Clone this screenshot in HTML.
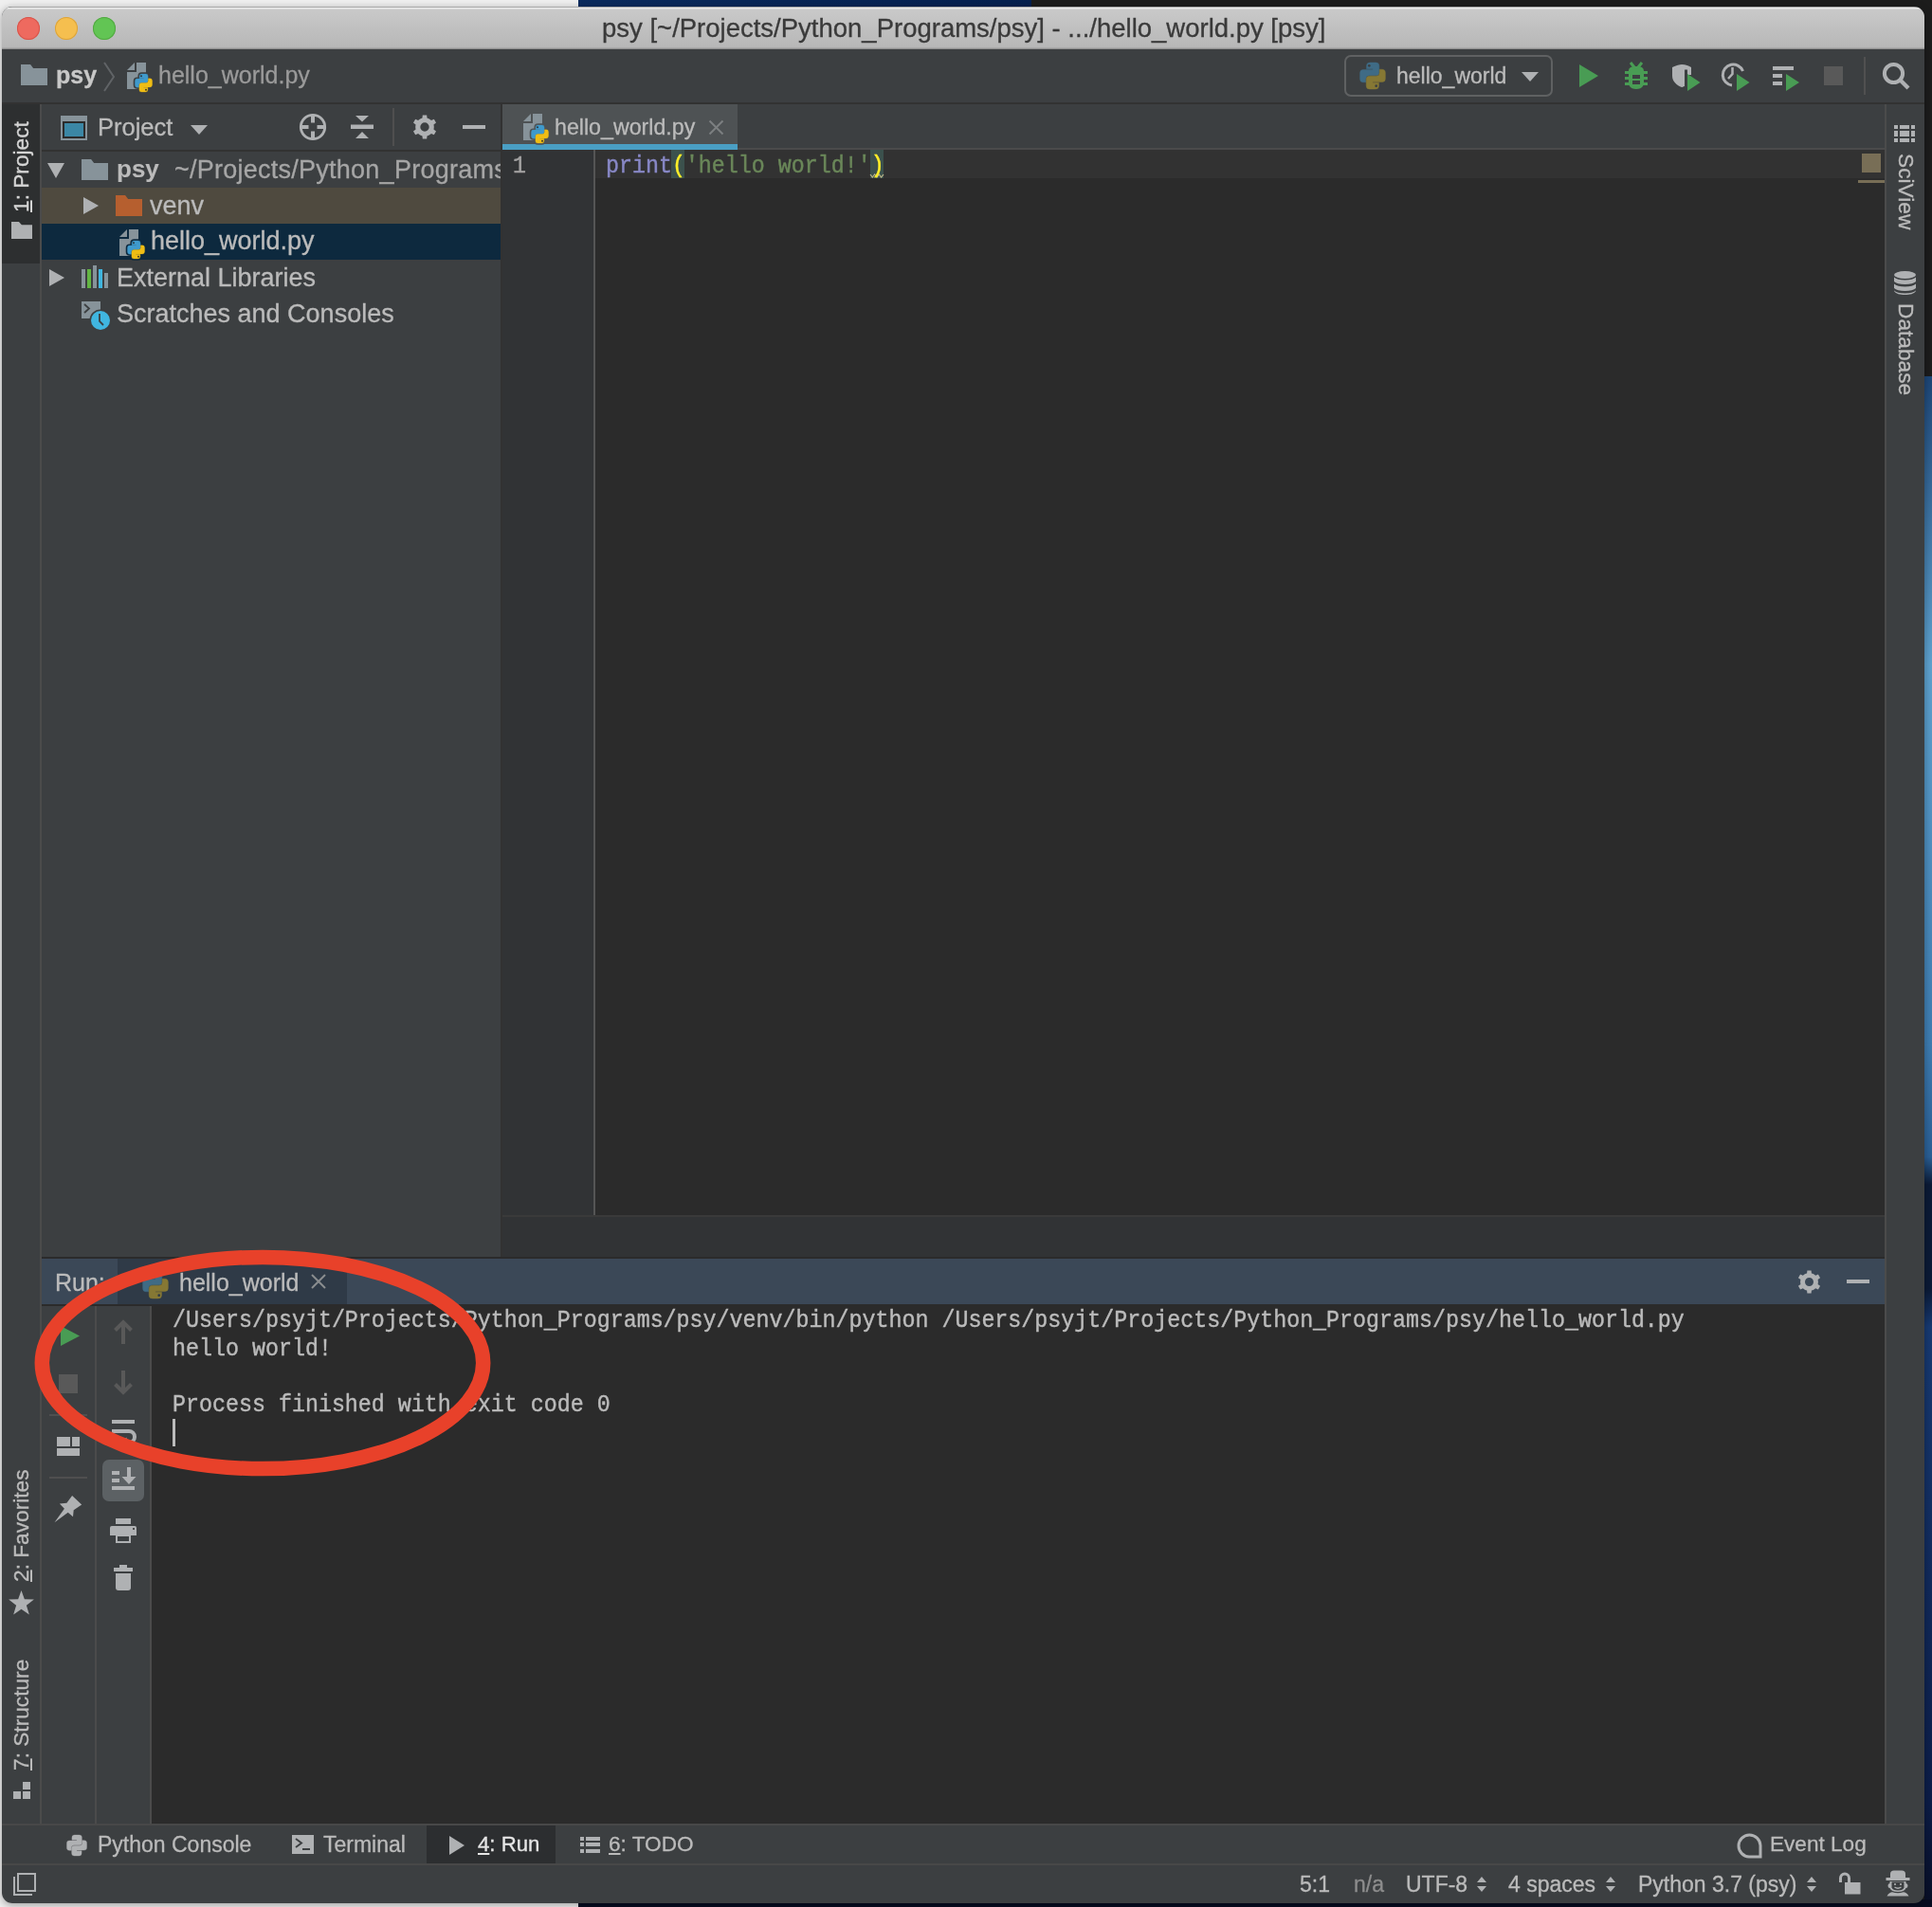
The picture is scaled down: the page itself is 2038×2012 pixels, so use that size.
<!DOCTYPE html>
<html><head><meta charset="utf-8">
<style>
*{margin:0;padding:0;box-sizing:border-box}
html,body{width:2038px;height:2012px;overflow:hidden;background:#1c1c1c;font-family:"Liberation Sans",sans-serif;position:relative}
.a{position:absolute}
.t{position:absolute;white-space:nowrap;line-height:1;will-change:transform;-webkit-text-stroke:0.3px currentColor}
.mono{-webkit-text-stroke:0.4px currentColor}
pre{will-change:transform}
.mono{font-family:"Liberation Mono",monospace}
svg{position:absolute;overflow:visible}
u{text-decoration:underline;text-underline-offset:2px}
</style></head><body>
<div class="a" style="left:0px;top:0px;width:610px;height:2012px;background:#efefef;"></div>
<div class="a" style="left:610px;top:0px;width:478px;height:12px;background:linear-gradient(90deg,#0b2b5e,#05204f);"></div>
<div class="a" style="left:1088px;top:0px;width:950px;height:12px;background:#1c1c1c;"></div>
<div class="a" style="left:2030px;top:0px;width:8px;height:397px;background:#1c1c1c;"></div>
<div class="a" style="left:2030px;top:397px;width:8px;height:1615px;background:linear-gradient(#1d4677 0.0%,#5ea2cf 18.8%,#3e7db2 43.5%,#2a5f95 51.0%,#0b1a36 52.8%,#0b1a36 59.6%,#173a73 62.1%,#0c1d48 93.1%,#080e25 100.0%);"></div>
<div class="a" style="left:610px;top:2004px;width:1428px;height:8px;background:#070c20;"></div>
<div class="a" style="left:2px;top:7px;width:2028px;height:2001px;border-radius:11px;box-shadow:0 2px 8px rgba(0,0,0,0.35)"></div>
<div id="win" class="a" style="left:0;top:0;width:2038px;height:2012px;clip-path:inset(7px 8px 4px 2px round 11px);background:#3c3f41">
<div class="a" style="left:0px;top:0px;width:2038px;height:52px;background:linear-gradient(#a9a9a9 7px,#a9a9a9 8px,#ebebeb 8px,#ebebeb 9px,#c9c9c9 10px,#b7b7b7 50px,#8e8e8e 51.5px);"></div>
<div class="a" style="left:18px;top:18px;width:24px;height:24px;border-radius:50%;background:#ee6a5f;box-shadow:inset 0 0 0 1px #d8544a"></div>
<div class="a" style="left:58px;top:18px;width:24px;height:24px;border-radius:50%;background:#f5bf4f;box-shadow:inset 0 0 0 1px #dba33b"></div>
<div class="a" style="left:98px;top:18px;width:24px;height:24px;border-radius:50%;background:#62c554;box-shadow:inset 0 0 0 1px #52a842"></div>
<div class="t" style="left:635.0px;top:16.2px;font-size:27.50px;color:#3a3a3a;">psy [~/Projects/Python_Programs/psy] - .../hello_world.py [psy]</div>
<div class="a" style="left:0px;top:52px;width:2038px;height:56px;background:#3c3f41;"></div>
<div class="a" style="left:0px;top:108px;width:2038px;height:2px;background:#323232;"></div>
<svg style="left:22px;top:68px" width="28" height="22" viewBox="0 0 28 22"><path d="M0,0 L10.1,0 L13.1,4.0 L28,4.0 L28,22 L0,22 Z" fill="#87939a"/></svg>
<div class="t" style="left:59.0px;top:66.8px;font-size:25.00px;color:#c8c8c8;font-weight:bold">psy</div>
<svg style="left:108px;top:64px" width="14" height="34"><path d="M2,2 L12,17 L2,32" fill="none" stroke="#606366" stroke-width="2"/></svg>
<svg style="left:134px;top:66px" width="20" height="28" viewBox="0 0 20 28"><path d="M0,8 L8,0 L8,8 Z" fill="#87939a"/><path d="M10,0 L20,0 L20,28 L0,28 L0,10 L10,10 Z" fill="#87939a"/></svg><svg style="left:141.8px;top:77.9px" width="19.0" height="19.0" viewBox="0 0 16 16"><path d="M6.3,0 L9.9,0 Q11.9,0 11.9,2 L11.9,5.9 Q11.9,7.9 9.9,7.9 L5.9,7.9 Q3.9,7.9 3.9,9.9 L3.9,11.9 L2.3,11.9 Q0.35,11.9 0.35,9.9 L0.35,6.3 Q0.35,4.3 2.3,4.3 L8,4.3 L8,3.9 L4.3,3.9 L4.3,2 Q4.3,0 6.3,0 Z" fill="#3c3f41" stroke="#3c3f41" stroke-width="2.86"/><path d="M9.7,16 L6.1,16 Q4.1,16 4.1,14 L4.1,10.1 Q4.1,8.1 6.1,8.1 L10.1,8.1 Q12.1,8.1 12.1,6.1 L12.1,4.1 L13.7,4.1 Q15.65,4.1 15.65,6.1 L15.65,9.7 Q15.65,11.7 13.7,11.7 L8,11.7 L8,12.1 L11.7,12.1 L11.7,14 Q11.7,16 9.7,16 Z" fill="#3c3f41" stroke="#3c3f41" stroke-width="2.86"/><path d="M6.3,0 L9.9,0 Q11.9,0 11.9,2 L11.9,5.9 Q11.9,7.9 9.9,7.9 L5.9,7.9 Q3.9,7.9 3.9,9.9 L3.9,11.9 L2.3,11.9 Q0.35,11.9 0.35,9.9 L0.35,6.3 Q0.35,4.3 2.3,4.3 L8,4.3 L8,3.9 L4.3,3.9 L4.3,2 Q4.3,0 6.3,0 Z" fill="#3f9acc" stroke="#3f9acc" stroke-width="0.25"/><path d="M9.7,16 L6.1,16 Q4.1,16 4.1,14 L4.1,10.1 Q4.1,8.1 6.1,8.1 L10.1,8.1 Q12.1,8.1 12.1,6.1 L12.1,4.1 L13.7,4.1 Q15.65,4.1 15.65,6.1 L15.65,9.7 Q15.65,11.7 13.7,11.7 L8,11.7 L8,12.1 L11.7,12.1 L11.7,14 Q11.7,16 9.7,16 Z" fill="#efbd14" stroke="#efbd14" stroke-width="0.25"/><circle cx="5.9" cy="1.9" r="0.75" fill="#2b2b2b"/><circle cx="10.1" cy="14.1" r="0.75" fill="#2b2b2b"/></svg>
<div class="t" style="left:167.0px;top:66.8px;font-size:25.00px;color:#9a9a9a;">hello_world.py</div>
<div class="a" style="left:1418px;top:58px;width:220px;height:44px;border:2px solid #5f6162;border-radius:7px"></div>
<svg style="left:1434.0px;top:66.0px" width="28.0" height="28.0" viewBox="0 0 16 16"><path d="M6.3,0 L9.9,0 Q11.9,0 11.9,2 L11.9,5.9 Q11.9,7.9 9.9,7.9 L5.9,7.9 Q3.9,7.9 3.9,9.9 L3.9,11.9 L2.3,11.9 Q0.35,11.9 0.35,9.9 L0.35,6.3 Q0.35,4.3 2.3,4.3 L8,4.3 L8,3.9 L4.3,3.9 L4.3,2 Q4.3,0 6.3,0 Z" fill="#3f6b85" stroke="#3f6b85" stroke-width="0.25"/><path d="M9.7,16 L6.1,16 Q4.1,16 4.1,14 L4.1,10.1 Q4.1,8.1 6.1,8.1 L10.1,8.1 Q12.1,8.1 12.1,6.1 L12.1,4.1 L13.7,4.1 Q15.65,4.1 15.65,6.1 L15.65,9.7 Q15.65,11.7 13.7,11.7 L8,11.7 L8,12.1 L11.7,12.1 L11.7,14 Q11.7,16 9.7,16 Z" fill="#867834" stroke="#867834" stroke-width="0.25"/><circle cx="5.9" cy="1.9" r="0.75" fill="#3c3f41"/><circle cx="10.1" cy="14.1" r="0.75" fill="#3c3f41"/></svg>
<div class="t" style="left:1473.0px;top:68.5px;font-size:23.00px;color:#bbbbbb;">hello_world</div>
<svg style="left:1605px;top:76px" width="18" height="10"><path d="M0,0 L18,0 L9.0,10 Z" fill="#afb1b3"/></svg>
<svg style="left:1666px;top:68px" width="20" height="24"><path d="M0,0 L20,12 L0,24 Z" fill="#499c54"/></svg>
<svg style="left:1713px;top:65px" width="26" height="30" viewBox="0 0 26 30"><path d="M7,1 L11,6 M19,1 L15,6" stroke="#499c54" stroke-width="3"/><path d="M5,10 C5,6 8,5 13,5 C18,5 21,6 21,10 L25,10 L25,13 L21,13 L21,16 L25,16 L25,19 L21,19 L21,22 L25,22 L25,25 L20.5,25 C19,28 16,29 13,29 C10,29 7,28 5.5,25 L1,25 L1,22 L5,22 L5,19 L1,19 L1,16 L5,16 L5,13 L1,13 L1,10 Z" fill="#499c54"/><rect x="9" y="14" width="8" height="4" fill="#3c3f41"/><rect x="9" y="20" width="8" height="4" fill="#3c3f41"/></svg>
<svg style="left:1763px;top:67px" width="32" height="30" viewBox="0 0 32 30"><path d="M1,4 C5,2 9,1 11,1 C14,1 18,2 21,4 L21,12 L17,12 L17,6.5 L14,6.5 L14,24 C12.5,24.5 11.5,25 11,25 C6,23 1,19 1,13 Z" fill="#afb1b3"/><path d="M17,11 L30.5,20 L17,29 Z" fill="#499c54"/></svg>
<svg style="left:1815px;top:66px" width="32" height="32" viewBox="0 0 32 32"><path d="M23.5,9 A11,11 0 1 0 12,24" fill="none" stroke="#afb1b3" stroke-width="3"/><path d="M12.5,5 L12.5,12 L8,17" fill="none" stroke="#afb1b3" stroke-width="2.5"/><path d="M17,12 L30.5,21 L17,30 Z" fill="#499c54"/></svg>
<div class="a" style="left:1870px;top:70px;width:22px;height:4px;background:#afb1b3;"></div>
<div class="a" style="left:1870px;top:78px;width:10px;height:4px;background:#afb1b3;"></div>
<div class="a" style="left:1870px;top:86px;width:10px;height:4px;background:#afb1b3;"></div>
<svg style="left:1884px;top:78px" width="14" height="18"><path d="M0,0 L14,9 L0,18 Z" fill="#499c54"/></svg>
<div class="a" style="left:1924px;top:70px;width:20px;height:20px;background:#595959;"></div>
<div class="a" style="left:1966px;top:60px;width:2px;height:40px;background:#505050;"></div>
<svg style="left:1984px;top:64px" width="32" height="32" viewBox="0 0 32 32"><circle cx="13.5" cy="13.5" r="9.6" fill="none" stroke="#afb1b3" stroke-width="4"/><path d="M20,20 L29,29" stroke="#afb1b3" stroke-width="4.2"/></svg>
<div class="a" style="left:2px;top:110px;width:40px;height:168px;background:#2d2f30;"></div>
<div class="a" style="left:42px;top:110px;width:2px;height:1816px;background:#4b4b4b;"></div>
<div class="t" style="left:10.7px;top:204.8px;font-size:22.70px;color:#d4d4d4;transform-origin:0 0;transform:rotate(-90deg);left:10.7px;top:224px"><u>1</u>: Project</div>
<svg style="left:12px;top:234px" width="22" height="18" viewBox="0 0 22 18"><path d="M0,0 L7.9,0 L10.9,3.2 L22,3.2 L22,18 L0,18 Z" fill="#afb1b3"/></svg>
<div class="t" style="left:0.0px;top:-19.2px;font-size:22.70px;color:#bbbbbb;transform-origin:0 0;transform:rotate(-90deg);left:10.7px;top:1669px"><u>2</u>: Favorites</div>
<svg style="left:9px;top:1678px" width="27" height="25.5" viewBox="0.6 0 24.8 23.6"><path d="M13,0 L16.1,8.6 L25.4,8.8 L18,14.5 L20.7,23.6 L13,18.3 L5.3,23.6 L8,14.5 L0.6,8.8 L9.9,8.6 Z" fill="#afb1b3"/></svg>
<div class="t" style="left:0.0px;top:-19.2px;font-size:22.70px;color:#bbbbbb;transform-origin:0 0;transform:rotate(-90deg);left:10.7px;top:1868px"><u>7</u>: Structure</div>
<div class="a" style="left:24px;top:1880px;width:8px;height:8px;background:#afb1b3;"></div>
<div class="a" style="left:14px;top:1890px;width:8px;height:8px;background:#afb1b3;"></div>
<div class="a" style="left:24px;top:1890px;width:8px;height:8px;background:#afb1b3;"></div>
<div class="a" style="left:44px;top:158px;width:484px;height:2px;background:#323232;"></div>
<div class="a" style="left:44px;top:198px;width:484px;height:38px;background:#4f4a3f;"></div>
<div class="a" style="left:44px;top:236px;width:484px;height:38px;background:#0d293e;"></div>
<div class="a" style="left:528px;top:110px;width:2px;height:1216px;background:#323232;"></div>
<svg style="left:64px;top:122px" width="28" height="26"><rect x="0" y="0" width="28" height="26" fill="#87939a"/><rect x="2" y="6" width="24" height="18" fill="#2b2b2b"/><rect x="4" y="8" width="20" height="14" fill="#3b87a5"/></svg>
<div class="t" style="left:103.0px;top:122.4px;font-size:25.50px;color:#bbbbbb;">Project</div>
<svg style="left:201px;top:132px" width="18" height="10"><path d="M0,0 L18,0 L9.0,10 Z" fill="#afb1b3"/></svg>
<svg style="left:315px;top:119px" width="30" height="30" viewBox="0 0 30 30"><circle cx="15" cy="15" r="12.7" fill="none" stroke="#afb1b3" stroke-width="2.8"/><path d="M15,3 L15,10.5 M15,19.5 L15,27 M3,15 L10.5,15 M19.5,15 L27,15" stroke="#afb1b3" stroke-width="4"/></svg>
<svg style="left:370px;top:121px" width="24" height="26" viewBox="0 0 24 26"><rect x="0" y="10.5" width="24" height="4.5" fill="#afb1b3"/><path d="M5,1 L19,1 L12,7.5 Z M5,25 L19,25 L12,18 Z" fill="#afb1b3"/></svg>
<div class="a" style="left:414px;top:114px;width:2px;height:40px;background:#4f4f4f;"></div>
<svg style="left:435px;top:121px" width="26" height="26" viewBox="0 0 25 25"><path fill-rule="evenodd" d="M14.93,3.42 L14.61,0.38 L10.39,0.38 L10.07,3.42 L8.90,3.82 L7.80,4.36 L6.78,5.04 L5.85,5.85 L3.06,4.61 L0.95,8.27 L3.42,10.07 L3.18,11.27 L3.10,12.50 L3.18,13.73 L3.42,14.93 L0.95,16.73 L3.06,20.39 L5.85,19.15 L6.78,19.96 L7.80,20.64 L8.90,21.18 L10.07,21.58 L10.39,24.62 L14.61,24.62 L14.93,21.58 L16.10,21.18 L17.20,20.64 L18.22,19.96 L19.15,19.15 L21.94,20.39 L24.05,16.73 L21.58,14.93 L21.82,13.73 L21.90,12.50 L21.82,11.27 L21.58,10.07 L24.05,8.27 L21.94,4.61 L19.15,5.85 L18.22,5.04 L17.20,4.36 L16.10,3.82 Z M12.5,8 A4.5,4.5 0 1 0 12.5,17 A4.5,4.5 0 1 0 12.5,8 Z" fill="#afb1b3"/></svg>
<div class="a" style="left:488px;top:132px;width:24px;height:4px;background:#afb1b3;"></div>
<svg style="left:50px;top:172px" width="18" height="16"><path d="M0,0 L18,0 L9.0,16 Z" fill="#afb1b3"/></svg>
<svg style="left:86px;top:168px" width="28" height="22" viewBox="0 0 28 22"><path d="M0,0 L10.1,0 L13.1,4.0 L28,4.0 L28,22 L0,22 Z" fill="#87939a"/></svg>
<div class="a" style="left:44px;top:160px;width:484px;height:40px;overflow:hidden"><div class="t" style="left:79.0px;top:5.3px;font-size:26.00px;color:#bbbbbb;font-weight:bold;-webkit-text-stroke:0.1px currentColor">psy</div><div class="t" style="left:140.0px;top:6.1px;font-size:27.00px;color:#a6a6a6;letter-spacing:0.25px">~/Projects/Python_Programs/psy</div></div>
<svg style="left:88px;top:208px" width="16" height="18"><path d="M0,0 L16,9.0 L0,18 Z" fill="#afb1b3"/></svg>
<svg style="left:122px;top:206px" width="28" height="22" viewBox="0 0 28 22"><path d="M0,0 L10.1,0 L13.1,4.0 L28,4.0 L28,22 L0,22 Z" fill="#b65f2f"/></svg>
<div class="t" style="left:158.0px;top:203.6px;font-size:27.00px;color:#bbbbbb;">venv</div>
<svg style="left:126px;top:242px" width="20" height="28" viewBox="0 0 20 28"><path d="M0,8 L8,0 L8,8 Z" fill="#87939a"/><path d="M10,0 L20,0 L20,28 L0,28 L0,10 L10,10 Z" fill="#87939a"/></svg><svg style="left:133.8px;top:253.9px" width="19.0" height="19.0" viewBox="0 0 16 16"><path d="M6.3,0 L9.9,0 Q11.9,0 11.9,2 L11.9,5.9 Q11.9,7.9 9.9,7.9 L5.9,7.9 Q3.9,7.9 3.9,9.9 L3.9,11.9 L2.3,11.9 Q0.35,11.9 0.35,9.9 L0.35,6.3 Q0.35,4.3 2.3,4.3 L8,4.3 L8,3.9 L4.3,3.9 L4.3,2 Q4.3,0 6.3,0 Z" fill="#0d293e" stroke="#0d293e" stroke-width="2.86"/><path d="M9.7,16 L6.1,16 Q4.1,16 4.1,14 L4.1,10.1 Q4.1,8.1 6.1,8.1 L10.1,8.1 Q12.1,8.1 12.1,6.1 L12.1,4.1 L13.7,4.1 Q15.65,4.1 15.65,6.1 L15.65,9.7 Q15.65,11.7 13.7,11.7 L8,11.7 L8,12.1 L11.7,12.1 L11.7,14 Q11.7,16 9.7,16 Z" fill="#0d293e" stroke="#0d293e" stroke-width="2.86"/><path d="M6.3,0 L9.9,0 Q11.9,0 11.9,2 L11.9,5.9 Q11.9,7.9 9.9,7.9 L5.9,7.9 Q3.9,7.9 3.9,9.9 L3.9,11.9 L2.3,11.9 Q0.35,11.9 0.35,9.9 L0.35,6.3 Q0.35,4.3 2.3,4.3 L8,4.3 L8,3.9 L4.3,3.9 L4.3,2 Q4.3,0 6.3,0 Z" fill="#3f9acc" stroke="#3f9acc" stroke-width="0.25"/><path d="M9.7,16 L6.1,16 Q4.1,16 4.1,14 L4.1,10.1 Q4.1,8.1 6.1,8.1 L10.1,8.1 Q12.1,8.1 12.1,6.1 L12.1,4.1 L13.7,4.1 Q15.65,4.1 15.65,6.1 L15.65,9.7 Q15.65,11.7 13.7,11.7 L8,11.7 L8,12.1 L11.7,12.1 L11.7,14 Q11.7,16 9.7,16 Z" fill="#efbd14" stroke="#efbd14" stroke-width="0.25"/><circle cx="5.9" cy="1.9" r="0.75" fill="#2b2b2b"/><circle cx="10.1" cy="14.1" r="0.75" fill="#2b2b2b"/></svg>
<div class="t" style="left:159.0px;top:241.1px;font-size:27.00px;color:#bbbbbb;">hello_world.py</div>
<svg style="left:52px;top:284px" width="16" height="18"><path d="M0,0 L16,9.0 L0,18 Z" fill="#afb1b3"/></svg>
<div class="a" style="left:86px;top:284px;width:4px;height:20px;background:#87939a;"></div>
<div class="a" style="left:92px;top:284px;width:4px;height:20px;background:#62b543;"></div>
<div class="a" style="left:98px;top:280px;width:4px;height:24px;background:#87939a;"></div>
<div class="a" style="left:104px;top:284px;width:4px;height:20px;background:#40b6e0;"></div>
<div class="a" style="left:110px;top:288px;width:4px;height:16px;background:#87939a;"></div>
<div class="t" style="left:123.0px;top:280.1px;font-size:27.00px;color:#bbbbbb;">External Libraries</div>
<svg style="left:86px;top:318px" width="32" height="32" viewBox="0 0 32 32"><rect x="0" y="0" width="20" height="18" fill="#87939a"/><path d="M3,3 L8,7.5 L3,12" fill="none" stroke="#3c3f41" stroke-width="1.8"/><circle cx="20" cy="20" r="11.5" fill="#3c3f41"/><circle cx="20" cy="20" r="10" fill="#40b6e0"/><path d="M19,13 L19,21 L23,25" fill="none" stroke="#3c3f41" stroke-width="1.8"/></svg>
<div class="t" style="left:123.0px;top:318.1px;font-size:27.00px;color:#bbbbbb;">Scratches and Consoles</div>
<div class="a" style="left:530px;top:110px;width:1458px;height:46px;background:#3c3f41;"></div>
<div class="a" style="left:530px;top:156px;width:1458px;height:2px;background:#4b4b4b;"></div>
<div class="a" style="left:530px;top:110px;width:248px;height:42px;background:#4e5254;"></div>
<div class="a" style="left:530px;top:152px;width:248px;height:6px;background:#4a9fc4;"></div>
<svg style="left:552px;top:120px" width="20" height="28" viewBox="0 0 20 28"><path d="M0,8 L8,0 L8,8 Z" fill="#87939a"/><path d="M10,0 L20,0 L20,28 L0,28 L0,10 L10,10 Z" fill="#87939a"/></svg><svg style="left:559.8px;top:131.9px" width="19.0" height="19.0" viewBox="0 0 16 16"><path d="M6.3,0 L9.9,0 Q11.9,0 11.9,2 L11.9,5.9 Q11.9,7.9 9.9,7.9 L5.9,7.9 Q3.9,7.9 3.9,9.9 L3.9,11.9 L2.3,11.9 Q0.35,11.9 0.35,9.9 L0.35,6.3 Q0.35,4.3 2.3,4.3 L8,4.3 L8,3.9 L4.3,3.9 L4.3,2 Q4.3,0 6.3,0 Z" fill="#4e5254" stroke="#4e5254" stroke-width="2.86"/><path d="M9.7,16 L6.1,16 Q4.1,16 4.1,14 L4.1,10.1 Q4.1,8.1 6.1,8.1 L10.1,8.1 Q12.1,8.1 12.1,6.1 L12.1,4.1 L13.7,4.1 Q15.65,4.1 15.65,6.1 L15.65,9.7 Q15.65,11.7 13.7,11.7 L8,11.7 L8,12.1 L11.7,12.1 L11.7,14 Q11.7,16 9.7,16 Z" fill="#4e5254" stroke="#4e5254" stroke-width="2.86"/><path d="M6.3,0 L9.9,0 Q11.9,0 11.9,2 L11.9,5.9 Q11.9,7.9 9.9,7.9 L5.9,7.9 Q3.9,7.9 3.9,9.9 L3.9,11.9 L2.3,11.9 Q0.35,11.9 0.35,9.9 L0.35,6.3 Q0.35,4.3 2.3,4.3 L8,4.3 L8,3.9 L4.3,3.9 L4.3,2 Q4.3,0 6.3,0 Z" fill="#3f9acc" stroke="#3f9acc" stroke-width="0.25"/><path d="M9.7,16 L6.1,16 Q4.1,16 4.1,14 L4.1,10.1 Q4.1,8.1 6.1,8.1 L10.1,8.1 Q12.1,8.1 12.1,6.1 L12.1,4.1 L13.7,4.1 Q15.65,4.1 15.65,6.1 L15.65,9.7 Q15.65,11.7 13.7,11.7 L8,11.7 L8,12.1 L11.7,12.1 L11.7,14 Q11.7,16 9.7,16 Z" fill="#efbd14" stroke="#efbd14" stroke-width="0.25"/><circle cx="5.9" cy="1.9" r="0.75" fill="#2b2b2b"/><circle cx="10.1" cy="14.1" r="0.75" fill="#2b2b2b"/></svg>
<div class="t" style="left:585.0px;top:122.9px;font-size:23.20px;color:#bbbbbb;">hello_world.py</div>
<svg style="left:748px;top:127px" width="15" height="15"><path d="M0.5,0.5 L14.5,14.5 M14.5,0.5 L0.5,14.5" stroke="#7c7f81" stroke-width="2"/></svg>
<div class="a" style="left:530px;top:158px;width:96px;height:1124px;background:#313335;"></div>
<div class="a" style="left:626px;top:158px;width:2px;height:1124px;background:#555555;"></div>
<div class="a" style="left:628px;top:158px;width:1360px;height:1124px;background:#2b2b2b;"></div>
<div class="a" style="left:628px;top:158px;width:1360px;height:30px;background:#323232;"></div>
<div class="t mono" style="left:541.0px;top:164.6px;font-size:23.30px;color:#a4a3a3;transform-origin:0 17.85px;transform:scaleY(1.08)">1</div>
<div class="a" style="left:708px;top:158px;width:14px;height:30px;background:#3b514d;"></div>
<div class="a" style="left:918px;top:158px;width:14px;height:30px;background:#3b514d;"></div>
<svg style="left:918px;top:183px" width="14" height="5"><path d="M0,1 L2.3,4 L4.6,1 L7,4 L9.3,1 L11.6,4 L14,1" fill="none" stroke="#bdb68a" stroke-width="1.2"/></svg>
<div class="t mono" style="left:639.0px;top:165.1px;font-size:23.30px;color:#a9b7c6;white-space:pre;transform-origin:0 17.85px;transform:scaleY(1.08)"><span style="color:#8888c6">print</span><span style="color:#ffef28">(</span><span style="color:#6a8759">'hello world!'</span><span style="color:#ffef28">)</span></div>
<div class="a" style="left:1964px;top:162px;width:20px;height:20px;background:#786e56;"></div>
<div class="a" style="left:1960px;top:190px;width:28px;height:3px;background:#786e56;"></div>
<div class="a" style="left:530px;top:1282px;width:1458px;height:2px;background:#3a3a3a;"></div>
<div class="a" style="left:530px;top:1284px;width:1458px;height:42px;background:#313335;"></div>
<div class="a" style="left:1988px;top:110px;width:2px;height:1816px;background:#4b4b4b;"></div>
<svg style="left:1998px;top:132px" width="22" height="18" viewBox="0 0 22 18"><rect x="0" y="0" width="4" height="4" fill="#afb1b3"/><rect x="6" y="0" width="10" height="4" fill="#afb1b3"/><rect x="18" y="0" width="4" height="4" fill="#afb1b3"/><rect x="0" y="6" width="4" height="6" fill="#afb1b3"/><rect x="6" y="6" width="10" height="6" fill="#afb1b3"/><rect x="18" y="6" width="4" height="6" fill="#afb1b3"/><rect x="0" y="14" width="4" height="4" fill="#afb1b3"/><rect x="6" y="14" width="10" height="4" fill="#afb1b3"/><rect x="18" y="14" width="4" height="4" fill="#afb1b3"/></svg>
<div class="t" style="left:0.0px;top:-19.2px;font-size:22.70px;color:#bbbbbb;transform-origin:0 0;transform:rotate(90deg);left:2022px;top:162px">SciView</div>
<svg style="left:1998px;top:286px" width="23" height="25" viewBox="0 0 23 25"><ellipse cx="11.5" cy="4" rx="11.5" ry="4" fill="#afb1b3"/><path d="M0,6.5 C2,8.5 6,9.5 11.5,9.5 C17,9.5 21,8.5 23,6.5 L23,11 C21,13 17,14 11.5,14 C6,14 2,13 0,11 Z M0,13.5 C2,15.5 6,16.5 11.5,16.5 C17,16.5 21,15.5 23,13.5 L23,18 C21,20 17,21 11.5,21 C6,21 2,20 0,18 Z M0,20.5 C2,22.5 6,23.5 11.5,23.5 C17,23.5 21,22.5 23,20.5 L23,21 C21,24 17,25 11.5,25 C6,25 2,24 0,21 Z" fill="#afb1b3"/></svg>
<div class="t" style="left:0.0px;top:-19.2px;font-size:22.70px;color:#bbbbbb;transform-origin:0 0;transform:rotate(90deg);left:2022px;top:320px">Database</div>
<div class="a" style="left:44px;top:1326px;width:1944px;height:2px;background:#2b2b2b;"></div>
<div class="a" style="left:44px;top:1328px;width:1944px;height:48px;background:#3b4857;"></div>
<div class="a" style="left:124px;top:1328px;width:242px;height:48px;background:#2f3a47;"></div>
<div class="a" style="left:44px;top:1376px;width:1944px;height:2px;background:#2b2b2b;"></div>
<div class="t" style="left:58.0px;top:1340.8px;font-size:25.00px;color:#bbbbbb;">Run:</div>
<svg style="left:150.0px;top:1342.0px" width="28.0" height="28.0" viewBox="0 0 16 16"><path d="M6.3,0 L9.9,0 Q11.9,0 11.9,2 L11.9,5.9 Q11.9,7.9 9.9,7.9 L5.9,7.9 Q3.9,7.9 3.9,9.9 L3.9,11.9 L2.3,11.9 Q0.35,11.9 0.35,9.9 L0.35,6.3 Q0.35,4.3 2.3,4.3 L8,4.3 L8,3.9 L4.3,3.9 L4.3,2 Q4.3,0 6.3,0 Z" fill="#3f6b85" stroke="#3f6b85" stroke-width="0.25"/><path d="M9.7,16 L6.1,16 Q4.1,16 4.1,14 L4.1,10.1 Q4.1,8.1 6.1,8.1 L10.1,8.1 Q12.1,8.1 12.1,6.1 L12.1,4.1 L13.7,4.1 Q15.65,4.1 15.65,6.1 L15.65,9.7 Q15.65,11.7 13.7,11.7 L8,11.7 L8,12.1 L11.7,12.1 L11.7,14 Q11.7,16 9.7,16 Z" fill="#867834" stroke="#867834" stroke-width="0.25"/><circle cx="5.9" cy="1.9" r="0.75" fill="#2f3a47"/><circle cx="10.1" cy="14.1" r="0.75" fill="#2f3a47"/></svg>
<div class="t" style="left:189.0px;top:1340.8px;font-size:25.00px;color:#bbbbbb;">hello_world</div>
<svg style="left:328px;top:1344px" width="16" height="16"><path d="M1,1 L15,15 M15,1 L1,15" stroke="#8a8d8f" stroke-width="2"/></svg>
<svg style="left:1896px;top:1340px" width="25" height="25" viewBox="0 0 25 25"><path fill-rule="evenodd" d="M14.93,3.42 L14.61,0.38 L10.39,0.38 L10.07,3.42 L8.90,3.82 L7.80,4.36 L6.78,5.04 L5.85,5.85 L3.06,4.61 L0.95,8.27 L3.42,10.07 L3.18,11.27 L3.10,12.50 L3.18,13.73 L3.42,14.93 L0.95,16.73 L3.06,20.39 L5.85,19.15 L6.78,19.96 L7.80,20.64 L8.90,21.18 L10.07,21.58 L10.39,24.62 L14.61,24.62 L14.93,21.58 L16.10,21.18 L17.20,20.64 L18.22,19.96 L19.15,19.15 L21.94,20.39 L24.05,16.73 L21.58,14.93 L21.82,13.73 L21.90,12.50 L21.82,11.27 L21.58,10.07 L24.05,8.27 L21.94,4.61 L19.15,5.85 L18.22,5.04 L17.20,4.36 L16.10,3.82 Z M12.5,8 A4.5,4.5 0 1 0 12.5,17 A4.5,4.5 0 1 0 12.5,8 Z" fill="#afb1b3"/></svg>
<div class="a" style="left:1948px;top:1350px;width:24px;height:4px;background:#afb1b3;"></div>
<div class="a" style="left:44px;top:1378px;width:56px;height:547px;background:#3c3f41;"></div>
<div class="a" style="left:100px;top:1378px;width:2px;height:547px;background:#4b4b4b;"></div>
<div class="a" style="left:102px;top:1378px;width:56px;height:547px;background:#3c3f41;"></div>
<div class="a" style="left:158px;top:1378px;width:2px;height:547px;background:#4b4b4b;"></div>
<div class="a" style="left:160px;top:1378px;width:1828px;height:547px;background:#2b2b2b;"></div>
<svg style="left:64px;top:1399px" width="20" height="21"><path d="M0,0 L20,10.5 L0,21 Z" fill="#499c54"/></svg>
<div class="a" style="left:62px;top:1450px;width:20px;height:20px;background:#595959;"></div>
<div class="a" style="left:52px;top:1492px;width:40px;height:2px;background:#4f4f4f;"></div>
<div class="a" style="left:60px;top:1516px;width:14px;height:10px;background:#afb1b3;"></div>
<div class="a" style="left:76px;top:1516px;width:8px;height:10px;background:#afb1b3;"></div>
<div class="a" style="left:60px;top:1528px;width:24px;height:8px;background:#afb1b3;"></div>
<div class="a" style="left:52px;top:1558px;width:40px;height:2px;background:#4f4f4f;"></div>
<svg style="left:56px;top:1577px" width="32" height="32"><path d="M1.5,29.2 L11.9,14.7 L6.9,9.4 L14.4,8.7 L20.1,0.9 L30.2,10.6 L21.7,16.3 L21,23.2 L15.7,18.8 Z" fill="#afb1b3"/></svg>
<svg style="left:120px;top:1393px" width="20" height="78" viewBox="0 0 20 78"><path d="M10,2 L10,25 M1.5,10.5 L10,2 L18.5,10.5 M10,53 L10,76 M1.5,67.5 L10,76 L18.5,67.5" fill="none" stroke="#595959" stroke-width="4"/></svg>
<svg style="left:118px;top:1497px" width="26" height="28" viewBox="0 0 26 28"><rect x="0" y="1" width="24" height="4" fill="#afb1b3"/><path d="M0,13 L18,13 A6,6 0 0 1 18,25 L14,25" fill="none" stroke="#afb1b3" stroke-width="4"/><path d="M15.5,19.5 L9,25 L15.5,30.5 Z" fill="#afb1b3"/></svg>
<div class="a" style="left:108px;top:1540px;width:44px;height:44px;background:#5c6164;border-radius:7px"></div>
<div class="a" style="left:118px;top:1552px;width:8px;height:4px;background:#afb1b3;"></div>
<div class="a" style="left:118px;top:1560px;width:8px;height:4px;background:#afb1b3;"></div>
<div class="a" style="left:118px;top:1568px;width:24px;height:4px;background:#afb1b3;"></div>
<svg style="left:128px;top:1548px" width="16" height="19"><rect x="6" y="0" width="4" height="12" fill="#afb1b3"/><path d="M0.5,10 L15.5,10 L8,18 Z" fill="#afb1b3"/></svg>
<svg style="left:116px;top:1602px" width="28" height="26" viewBox="0 0 28 26"><rect x="6" y="0" width="16" height="6" fill="#afb1b3"/><path d="M0,10 Q0,8 2,8 L26,8 Q28,8 28,10 L28,18 L0,18 Z" fill="#afb1b3"/><circle cx="25" cy="11" r="1" fill="#2b2b2b"/><rect x="7" y="18" width="14" height="7" fill="none" stroke="#afb1b3" stroke-width="2"/></svg>
<svg style="left:119px;top:1651px" width="22" height="28" viewBox="0 0 22 28"><rect x="7" y="0" width="8" height="4" fill="#afb1b3"/><rect x="1" y="3" width="20" height="4" fill="#afb1b3"/><path d="M3,9 L19,9 L19,24 Q19,27 16,27 L6,27 Q3,27 3,24 Z" fill="#afb1b3"/></svg>
<pre class="a mono" style="left:181.6px;top:1379.3px;font-size:23.32px;line-height:27.78px;color:#bbbbbb;margin:0;transform-origin:0 0;transform:scaleY(1.08)">/Users/psyjt/Projects/Python_Programs/psy/venv/bin/python /Users/psyjt/Projects/Python_Programs/psy/hello_world.py
hello world!

Process finished with exit code 0</pre>
<div class="a" style="left:182px;top:1497px;width:3px;height:29px;background:#bbbbbb;"></div>
<div class="a" style="left:0px;top:1924px;width:2038px;height:2px;background:#484848;"></div>
<div class="a" style="left:450px;top:1926px;width:136px;height:40px;background:#2c2e30;"></div>
<svg style="left:70.0px;top:1936.0px" width="22.0" height="22.0" viewBox="0 0 16 16"><path d="M6.3,0 L9.9,0 Q11.9,0 11.9,2 L11.9,5.9 Q11.9,7.9 9.9,7.9 L5.9,7.9 Q3.9,7.9 3.9,9.9 L3.9,11.9 L2.3,11.9 Q0.35,11.9 0.35,9.9 L0.35,6.3 Q0.35,4.3 2.3,4.3 L8,4.3 L8,3.9 L4.3,3.9 L4.3,2 Q4.3,0 6.3,0 Z" fill="#afb1b3" stroke="#afb1b3" stroke-width="0.25"/><path d="M9.7,16 L6.1,16 Q4.1,16 4.1,14 L4.1,10.1 Q4.1,8.1 6.1,8.1 L10.1,8.1 Q12.1,8.1 12.1,6.1 L12.1,4.1 L13.7,4.1 Q15.65,4.1 15.65,6.1 L15.65,9.7 Q15.65,11.7 13.7,11.7 L8,11.7 L8,12.1 L11.7,12.1 L11.7,14 Q11.7,16 9.7,16 Z" fill="#afb1b3" stroke="#afb1b3" stroke-width="0.25"/><circle cx="5.9" cy="1.9" r="0.75" fill="#afb1b3"/><circle cx="10.1" cy="14.1" r="0.75" fill="#afb1b3"/></svg>
<div class="t" style="left:103.0px;top:1935.0px;font-size:23.00px;color:#bbbbbb;">Python Console</div>
<svg style="left:308px;top:1936px" width="23" height="20"><rect width="23" height="20" fill="#afb1b3"/><path d="M4,4 L10,8.5 L4,13" fill="none" stroke="#3c3f41" stroke-width="2"/><rect x="11" y="14" width="8" height="2" fill="#3c3f41"/></svg>
<div class="t" style="left:341.0px;top:1935.0px;font-size:23.00px;color:#bbbbbb;">Terminal</div>
<svg style="left:474px;top:1937px" width="16" height="20"><path d="M0,0 L16,10 L0,20 Z" fill="#afb1b3"/></svg>
<div class="t" style="left:504.0px;top:1935.2px;font-size:22.20px;color:#e6e6e6;"><u>4</u>: Run</div>
<svg style="left:612px;top:1938px" width="21" height="17"><rect x="0" y="0" width="4" height="4" fill="#afb1b3"/><rect x="6" y="0" width="15" height="4" fill="#afb1b3"/><rect x="0" y="6" width="4" height="4" fill="#afb1b3"/><rect x="6" y="6" width="15" height="4" fill="#afb1b3"/><rect x="0" y="13" width="4" height="4" fill="#afb1b3"/><rect x="6" y="13" width="15" height="4" fill="#afb1b3"/></svg>
<div class="t" style="left:642.0px;top:1934.9px;font-size:22.60px;color:#bbbbbb;"><u>6</u>: TODO</div>
<svg style="left:1832px;top:1934px" width="27" height="27" viewBox="0 0 27 27"><path d="M25,25 L13,25 A11.5,11.5 0 1 1 25,13 Z" fill="none" stroke="#afb1b3" stroke-width="3"/></svg>
<div class="t" style="left:1867.0px;top:1935.1px;font-size:22.60px;color:#bbbbbb;">Event Log</div>
<div class="a" style="left:0px;top:1966px;width:2038px;height:2px;background:#484848;"></div>
<svg style="left:14px;top:1976px" width="25" height="25"><path d="M1,4 L1,23 L20,23" fill="none" stroke="#afb1b3" stroke-width="2"/><rect x="5" y="1" width="18" height="18" fill="none" stroke="#afb1b3" stroke-width="2"/></svg>
<div class="t" style="left:1371.0px;top:1976.5px;font-size:23.00px;color:#bbbbbb;">5:1</div>
<div class="t" style="left:1428.0px;top:1976.5px;font-size:23.00px;color:#8d8d8d;">n/a</div>
<div class="t" style="left:1483.0px;top:1976.5px;font-size:23.00px;color:#bbbbbb;">UTF-8</div>
<div class="t" style="left:1591.0px;top:1976.5px;font-size:23.00px;color:#bbbbbb;">4 spaces</div>
<div class="t" style="left:1728.0px;top:1976.5px;font-size:23.00px;color:#bbbbbb;">Python 3.7 (psy)</div>
<svg style="left:1558px;top:1980px" width="10" height="16"><path d="M0,6 L10,6 L5,0 Z M0,10 L10,10 L5,16 Z" fill="#afb1b3"/></svg>
<svg style="left:1694px;top:1980px" width="10" height="16"><path d="M0,6 L10,6 L5,0 Z M0,10 L10,10 L5,16 Z" fill="#afb1b3"/></svg>
<svg style="left:1906px;top:1980px" width="10" height="16"><path d="M0,6 L10,6 L5,0 Z M0,10 L10,10 L5,16 Z" fill="#afb1b3"/></svg>
<svg style="left:1940px;top:1975px" width="23" height="24" viewBox="0 0 23 24"><path d="M1.5,11 L1.5,6.5 A4.5,4.5 0 0 1 10.5,6.5 L10.5,12" fill="none" stroke="#afb1b3" stroke-width="3"/><rect x="6" y="11" width="16.5" height="12.5" fill="#afb1b3"/></svg>
<svg style="left:1989px;top:1973px" width="26" height="28" viewBox="0 0 26 28"><path d="M5,8.5 L5,4 Q5,0.5 9,0.5 L17,0.5 Q21,0.5 21,4 L21,8.5 Z" fill="#afb1b3"/><rect x="0.5" y="8" width="25" height="3" fill="#afb1b3"/><path d="M4.5,12 L21.5,12 L21.5,14 Q23.5,14 23.5,16.5 Q23.5,19 21.5,19 Q20,23 13,23 Q6,23 4.5,19 Q2.5,19 2.5,16.5 Q2.5,14 4.5,14 Z" fill="#afb1b3"/><path d="M6.5,12.5 L19.5,12.5 L19.5,18.5 Q18.5,21.5 13,21.5 Q7.5,21.5 6.5,18.5 Z" fill="#3c3f41"/><circle cx="10" cy="15" r="1.1" fill="#afb1b3"/><circle cx="16" cy="15" r="1.1" fill="#afb1b3"/><path d="M9.5,18 Q13,20.5 16.5,18" fill="none" stroke="#afb1b3" stroke-width="1.3"/><path d="M1.5,27.5 Q3,24 7,23.2 Q13,25.5 19,23.2 Q23,24 24.5,27.5 Z" fill="#afb1b3"/></svg>
<svg style="left:0;top:0" width="2038" height="2012"><ellipse cx="277" cy="1438" rx="232.7" ry="111.6" fill="none" stroke="#e8412a" stroke-width="15.5"/></svg>
</div>
</body></html>
